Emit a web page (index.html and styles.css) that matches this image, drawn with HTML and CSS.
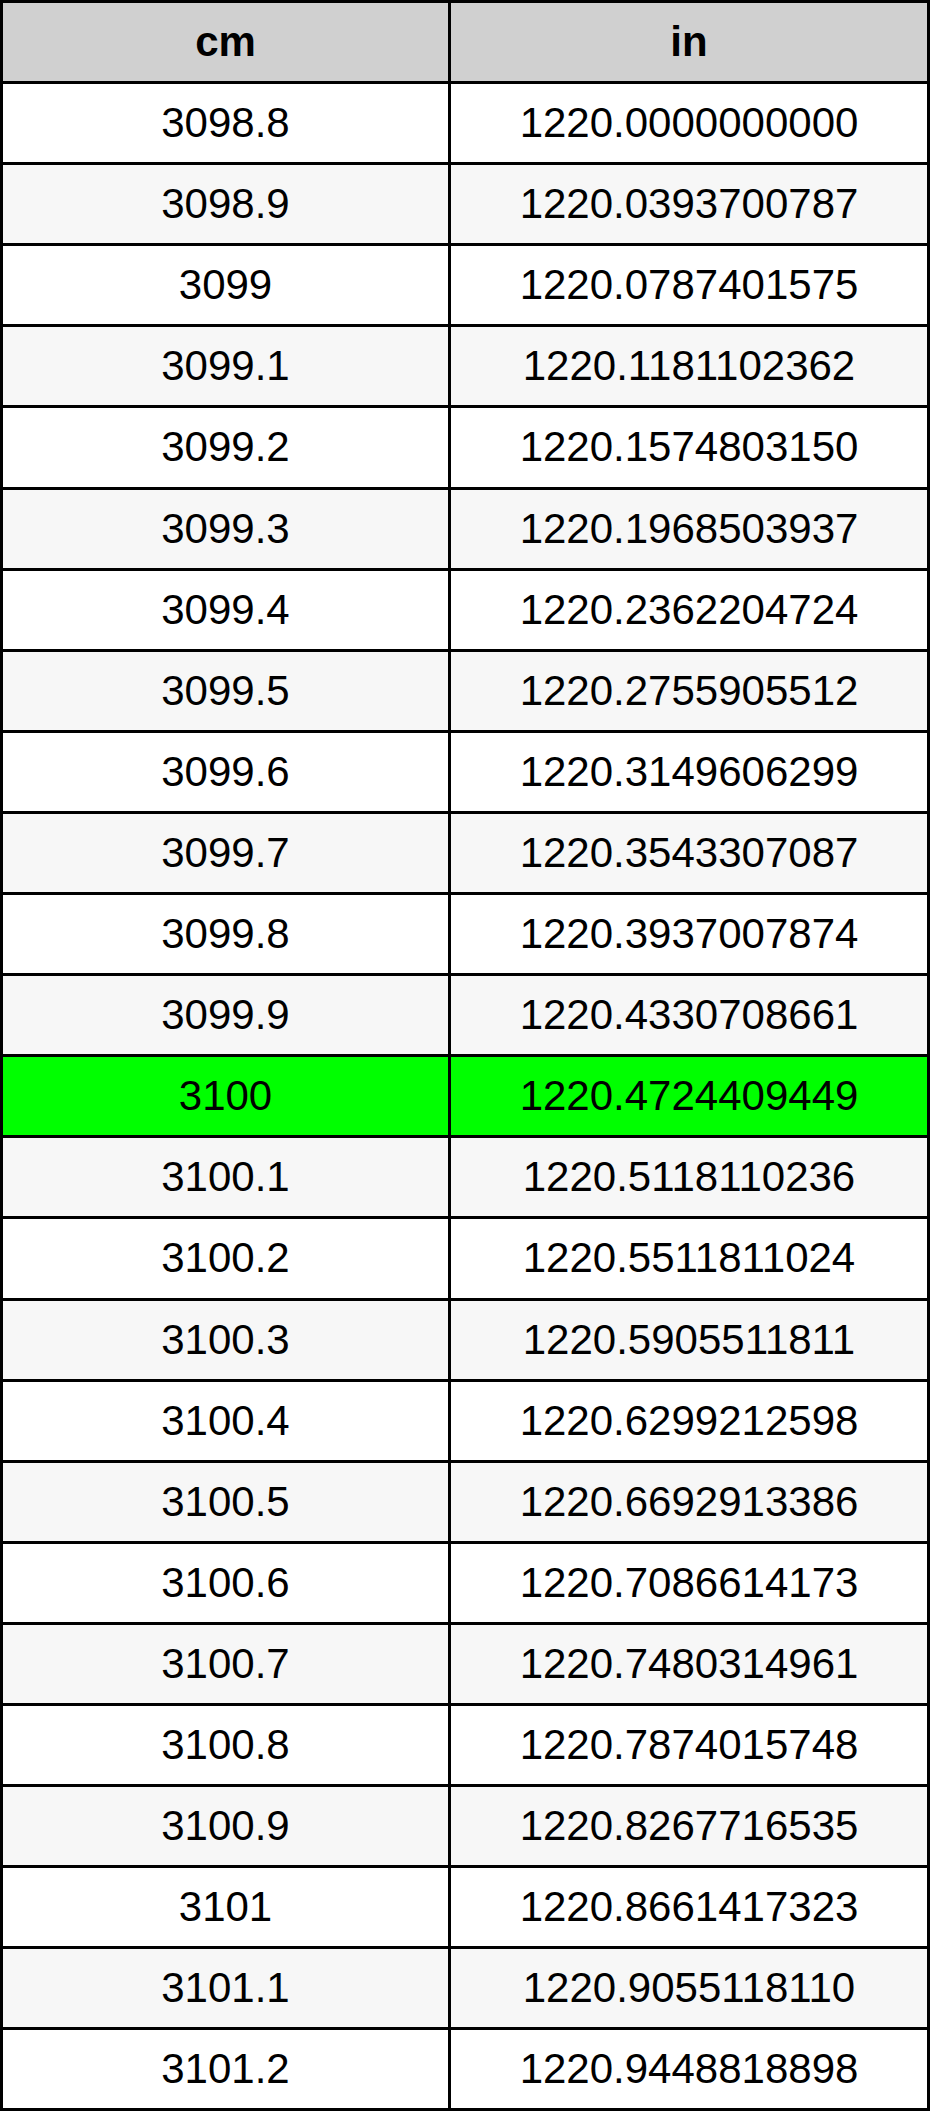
FILE: index.html
```html
<!DOCTYPE html>
<html lang="en">
<head>
<meta charset="utf-8">
<title>cm to in</title>
<link rel="stylesheet" href="styles.css">
</head>
<body>
<table class="conv">
<colgroup><col class="col-cm"><col class="col-in"></colgroup>
<thead>
<tr><th>cm</th><th>in</th></tr>
</thead>
<tbody>
<tr><td>3098.8</td><td>1220.0000000000</td></tr>
<tr><td>3098.9</td><td>1220.0393700787</td></tr>
<tr><td>3099</td><td>1220.0787401575</td></tr>
<tr><td>3099.1</td><td>1220.1181102362</td></tr>
<tr><td>3099.2</td><td>1220.1574803150</td></tr>
<tr><td>3099.3</td><td>1220.1968503937</td></tr>
<tr><td>3099.4</td><td>1220.2362204724</td></tr>
<tr><td>3099.5</td><td>1220.2755905512</td></tr>
<tr><td>3099.6</td><td>1220.3149606299</td></tr>
<tr><td>3099.7</td><td>1220.3543307087</td></tr>
<tr><td>3099.8</td><td>1220.3937007874</td></tr>
<tr><td>3099.9</td><td>1220.4330708661</td></tr>
<tr class="hit"><td>3100</td><td>1220.4724409449</td></tr>
<tr><td>3100.1</td><td>1220.5118110236</td></tr>
<tr><td>3100.2</td><td>1220.5511811024</td></tr>
<tr><td>3100.3</td><td>1220.5905511811</td></tr>
<tr><td>3100.4</td><td>1220.6299212598</td></tr>
<tr><td>3100.5</td><td>1220.6692913386</td></tr>
<tr><td>3100.6</td><td>1220.7086614173</td></tr>
<tr><td>3100.7</td><td>1220.7480314961</td></tr>
<tr><td>3100.8</td><td>1220.7874015748</td></tr>
<tr><td>3100.9</td><td>1220.8267716535</td></tr>
<tr><td>3101</td><td>1220.8661417323</td></tr>
<tr><td>3101.1</td><td>1220.9055118110</td></tr>
<tr><td>3101.2</td><td>1220.9448818898</td></tr>
</tbody>
</table>
</body>
</html>
```
FILE: styles.css
```css
html, body {
  margin: 0;
  padding: 0;
  background: #ffffff;
}

.conv {
  width: 930px;
  table-layout: fixed;
  border-collapse: collapse;
  font-family: "Liberation Sans", Arial, Helvetica, sans-serif;
  font-size: 42px;
  color: #000000;
}

.col-cm {
  width: 448px;
}

.conv th,
.conv td {
  border: 3px solid #000000;
  padding: 0;
  line-height: 78.1px;
  text-align: center;
  vertical-align: middle;
  white-space: nowrap;
}

.conv th {
  background: #d0d0d0;
  font-weight: bold;
}

.conv tbody tr {
  background: #ffffff;
}

.conv tbody tr:nth-child(even) {
  background: #f7f7f7;
}

.conv tbody tr.hit {
  background: #00ff00;
}
```
